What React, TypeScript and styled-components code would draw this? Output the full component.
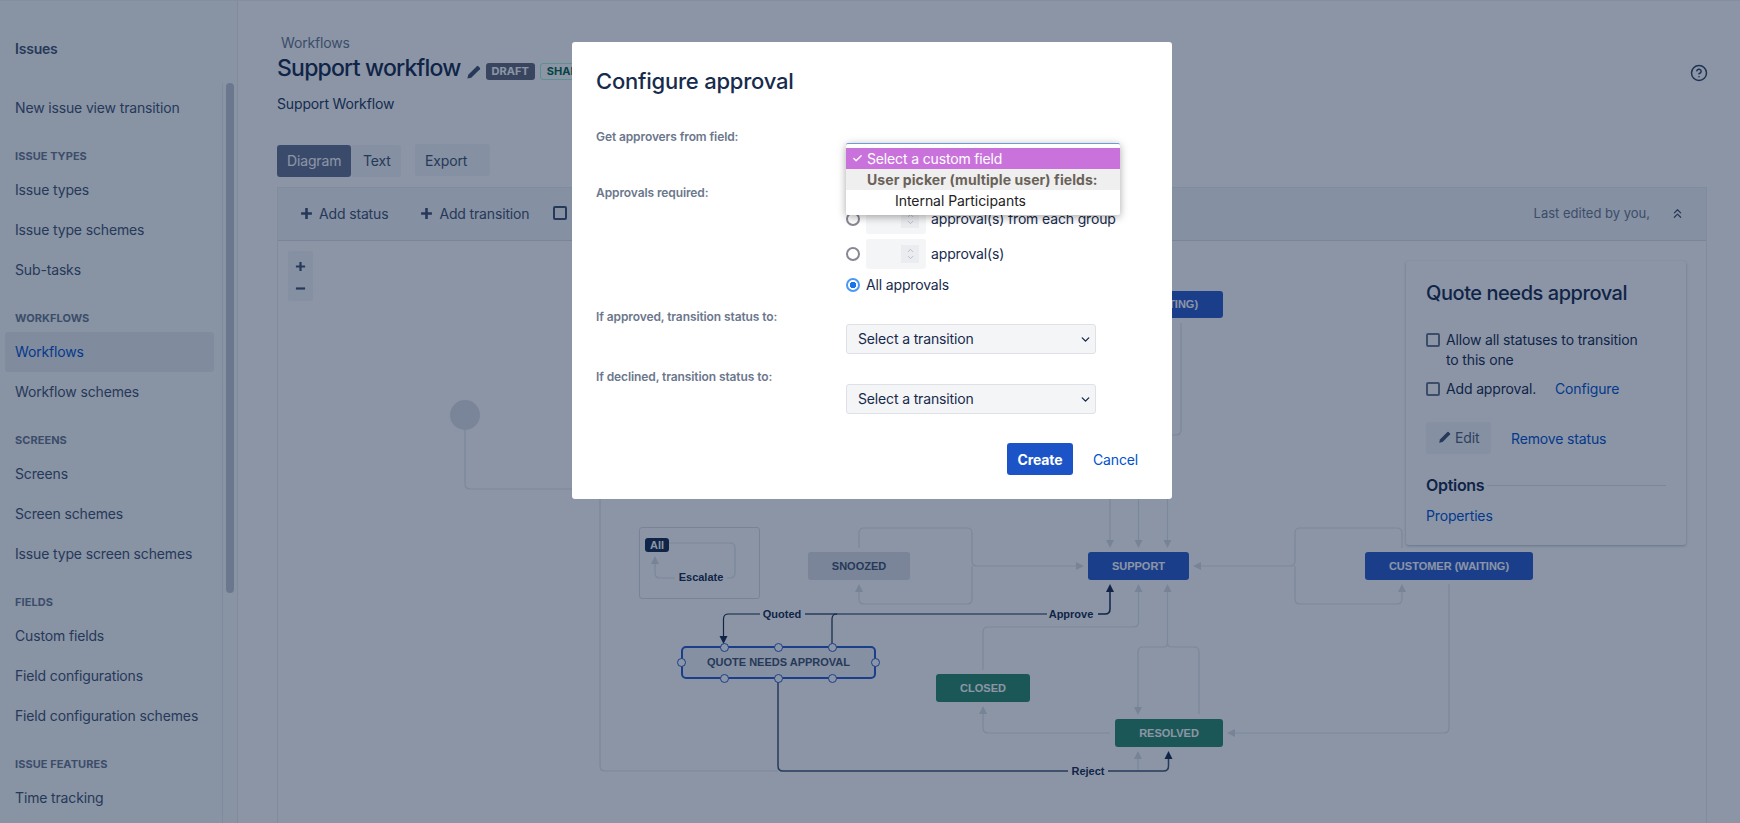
import React from "react";
import styled, { createGlobalStyle } from "styled-components";
import { ChevronsUp, CircleHelp, Check, ChevronDown, ChevronUp } from "lucide-react";

const UI = `Inter, "Noto Sans", sans-serif`;
const DIAGRAM = `"Liberation Sans", Arial, sans-serif`;
const OX = 278;
const OY = 241;

const Global = createGlobalStyle`
  html, body { margin: 0; padding: 0; background: #fff; height: 100%; overflow: hidden; }
  body { font-family: ${UI}; font-size: 14px; color: #172b4d; letter-spacing: -0.15px; }
  #root { height: 823px; overflow: hidden; }
`;

const Page = styled.div`
  display: grid;
  grid-template-columns: 238px 1fr;
  height: 823px;
  border-top: 1px solid #f0f1f4;
  box-sizing: border-box;
  overflow: hidden;
`;
const Sidebar = styled.aside`
  background: #fafbfc;
  border-right: 1px solid #ebecf0;
  display: flex;
  flex-direction: column;
  min-height: 0;
`;
const SidebarTitle = styled.div`
  height: 82px;
  flex: none;
  box-sizing: border-box;
  padding: 38px 0 0 15px;
  font-size: 14px;
  line-height: 20px;
  font-weight: 600;
  letter-spacing: -0.2px;
  color: #42526e;
`;
const SidebarBody = styled.div`
  flex: 1;
  display: flex;
  min-height: 0;
`;
const Nav = styled.nav`
  width: 223px;
  box-sizing: border-box;
  padding: 5px 8px 0 5px;
  border-right: 1px solid #ebecf0;
  flex: none;
`;
const Track = styled.div`
  flex: 1;
  padding-left: 3px;
`;
const Thumb = styled.div`
  width: 8px;
  height: 510px;
  border-radius: 4px;
  background: #c1c7d0;
`;
const NavHeading = styled.div`
  height: 42px;
  box-sizing: border-box;
  padding: 20px 0 0 10px;
  font-size: 11px;
  line-height: 16px;
  font-weight: 700;
  letter-spacing: 0.05px;
  color: #6b778c;
`;
const NavItem = styled.div<{ $active?: boolean }>`
  height: 40px;
  box-sizing: border-box;
  display: flex;
  align-items: center;
  padding: 0 0 2px 10px;
  border-radius: 3px;
  font-size: 14px;
  color: ${(p) => (p.$active ? "#0052cc" : "#42526e")};
  background: ${(p) => (p.$active ? "#ebecf0" : "transparent")};
`;

const Main = styled.main`
  padding: 33px 33px 0 39px;
  display: flex;
  flex-direction: column;
  min-width: 0;
`;
const Header = styled.header`
  display: flex;
  justify-content: space-between;
  align-items: flex-start;
`;
const Crumb = styled.div`
  padding-left: 4px;
  line-height: 18px;
  color: #6b778c;
`;
const TitleRow = styled.div`
  display: flex;
  align-items: center;
  margin-top: 1px;
  height: 30px;
`;
const Title = styled.h1`
  margin: 0;
  font-size: 23px;
  line-height: 30px;
  font-weight: 500;
  letter-spacing: -0.78px;
  color: #172b4d;
`;
const Pencil = styled.svg<{ $size: number }>`
  width: ${(p) => p.$size}px;
  height: ${(p) => p.$size}px;
  fill: #42526e;
  flex: none;
`;
const TitlePencil = styled(Pencil)`
  margin: 9px 5px 0 5px;
`;
const Badge = styled.span<{ $green?: boolean }>`
  margin-top: 6px;
  height: 17px;
  box-sizing: border-box;
  padding: 0 6px;
  display: inline-flex;
  align-items: center;
  border-radius: 3px;
  font-size: 11px;
  font-weight: 700;
  letter-spacing: 0;
  margin-right: 5px;
  color: ${(p) => (p.$green ? "#006644" : "#fff")};
  background: ${(p) => (p.$green ? "#fff" : "#64687a")};
  border: ${(p) => (p.$green ? "1px solid #abf5d1" : "none")};
`;
const Description = styled.p`
  margin: 11px 0 0;
  line-height: 20px;
  font-size: 14px;
  color: #253858;
`;
const Help = styled(CircleHelp)`
  width: 18px;
  height: 18px;
  margin-top: 30px;
  margin-right: -1px;
  color: #344563;
`;
const Tabs = styled.div`
  margin-top: 30px;
  display: flex;
  align-items: flex-start;
  height: 33px;
`;
const Tab = styled.div<{ $active?: boolean; $w: number; $gap?: number; $up?: boolean; $pad?: number }>`
  width: ${(p) => p.$w}px;
  height: 32px;
  box-sizing: border-box;
  margin-left: ${(p) => p.$gap ?? 0}px;
  margin-top: ${(p) => (p.$up ? 0 : 1)}px;
  padding: 0 0 ${(p) => (p.$up ? 0 : 2)}px ${(p) => p.$pad ?? 10}px;
  display: flex;
  align-items: center;
  border-radius: 3px;
  background: ${(p) => (p.$active ? "#667190" : "#f4f5f7")};
  color: ${(p) => (p.$active ? "#fff" : "#42526e")};
`;
const Panel = styled.section`
  margin-top: 10px;
  border: 1px solid #ebecf0;
  border-bottom: 0;
  flex: 1;
  display: flex;
  flex-direction: column;
  min-height: 0;
`;
const Toolbar = styled.div`
  flex: none;
  height: 53px;
  box-sizing: border-box;
  border-bottom: 1px solid #dfe1e6;
  background: #f4f5f7;
  display: flex;
  align-items: center;
  padding: 0 21px 2px 22px;
  color: #42526e;
`;
const ToolButton = styled.div<{ $gap: number }>`
  display: flex;
  align-items: center;
  gap: 6px;
  margin-right: ${(p) => p.$gap}px;
  svg {
    width: 13px;
    height: 13px;
  }
`;
const Box = styled.span`
  width: 14px;
  height: 14px;
  flex: none;
  box-sizing: border-box;
  border: 2px solid #42526e;
  border-radius: 2px;
`;
const ToolSpacer = styled.div`
  flex: 1;
`;
const Edited = styled.span`
  font-size: 13px;
  letter-spacing: 0;
  color: #6b778c;
  margin-right: 20px;
`;
const Collapse = styled(ChevronsUp)`
  width: 15px;
  height: 15px;
  color: #42526e;
`;

const Canvas = styled.div`
  position: relative;
  flex: 1;
  min-height: 0;
  overflow: hidden;
`;
const Lines = styled.svg`
  position: absolute;
  left: 0;
  top: 0;
  width: 1429px;
  height: 582px;
`;
const ZoomBox = styled.div`
  position: absolute;
  left: 10px;
  top: 10px;
  width: 25px;
  height: 50px;
  box-sizing: border-box;
  padding-top: 10px;
  border-radius: 3px;
  background: #f4f5f7;
  display: flex;
  flex-direction: column;
  align-items: center;
  gap: 11px;
  color: #42526e;
  svg {
    width: 11px;
    height: 11px;
  }
`;
const Node = styled.div<{ $x: number; $y: number; $w: number; $h: number; $bg: string; $fg: string }>`
  position: absolute;
  left: ${(p) => p.$x - OX}px;
  top: ${(p) => p.$y - OY}px;
  width: ${(p) => p.$w}px;
  height: ${(p) => p.$h}px;
  display: flex;
  align-items: center;
  justify-content: center;
  border-radius: 3px;
  font: bold 11px/1 ${DIAGRAM};
  letter-spacing: 0;
  background: ${(p) => p.$bg};
  color: ${(p) => p.$fg};
  white-space: nowrap;
`;
const SelectedNode = styled(Node)`
  box-sizing: border-box;
  border: 2px solid #2b5ccb;
  border-radius: 5px;
`;
const Handle = styled.span<{ $x: number; $y: number }>`
  position: absolute;
  left: ${(p) => p.$x - OX - 4}px;
  top: ${(p) => p.$y - OY - 4}px;
  width: 9px;
  height: 9px;
  box-sizing: border-box;
  border-radius: 50%;
  border: 1px solid #2b5ccb;
  background: #fff;
`;
const EdgeLabel = styled.span<{ $x: number; $y: number }>`
  position: absolute;
  left: ${(p) => p.$x - OX}px;
  top: ${(p) => p.$y - OY}px;
  transform: translate(-50%, -50%);
  font: bold 11px/1 ${DIAGRAM};
  letter-spacing: 0;
  color: #172b4d;
  white-space: nowrap;
`;
const GlobalFrame = styled.div`
  position: absolute;
  left: ${639 - OX}px;
  top: ${527 - OY}px;
  width: 121px;
  height: 72px;
  box-sizing: border-box;
  border: 1.5px solid #dadde3;
  border-radius: 3px;
`;
const Side = styled.div`
  position: absolute;
  left: ${1406 - OX}px;
  top: ${261 - OY}px;
  width: 280px;
  height: 284px;
  box-sizing: border-box;
  padding: 20px 20px 0;
  background: #fff;
  border-radius: 3px;
  box-shadow: 0 1px 3px rgba(9, 30, 66, 0.28);
`;
const SideTitle = styled.h2`
  margin: 0 0 25px;
  font-size: 20px;
  line-height: 24px;
  font-weight: 500;
  letter-spacing: -0.45px;
  color: #172b4d;
`;
const CheckRow = styled.div`
  display: flex;
  align-items: flex-start;
  gap: 6px;
  line-height: 20px;
  margin-bottom: 9px;
  ${Box} {
    margin-top: 3px;
    border-color: #6b778c;
  }
`;
const Link = styled.a<{ $gap?: number }>`
  color: #0052cc;
  margin-left: ${(p) => p.$gap ?? 0}px;
`;
const SideActions = styled.div`
  margin-top: 23px;
  display: flex;
  align-items: center;
`;
const EditButton = styled.div`
  width: 65px;
  height: 32px;
  box-sizing: border-box;
  padding: 0 0 2px 12px;
  background: #f4f5f7;
  border-radius: 3px;
  display: flex;
  align-items: center;
  gap: 4px;
  color: #505f79;
  margin-right: 20px;
`;
const OptionsHead = styled.div`
  margin-top: 20px;
  display: flex;
  align-items: center;
  gap: 3px;
  font-size: 16px;
  line-height: 22px;
  font-weight: 600;
  letter-spacing: -0.3px;
  &::after {
    content: "";
    flex: 1;
    height: 1px;
    background: #dfe1e6;
  }
`;
const OptionsLinks = styled.div`
  margin-top: 10px;
  line-height: 20px;
`;

const Overlay = styled.div`
  position: fixed;
  inset: 0;
  background: rgba(9, 30, 66, 0.47);
  padding: 42px 0 0 4px;
  display: flex;
  justify-content: center;
  align-items: flex-start;
`;
const Modal = styled.div`
  width: 600px;
  height: 457px;
  box-sizing: border-box;
  background: #fff;
  border-radius: 3px;
  padding: 24px 24px 0;
`;
const ModalTitle = styled.h2`
  margin: 0 0 34px;
  font-size: 22px;
  line-height: 30px;
  font-weight: 500;
  letter-spacing: -0.22px;
  color: #172b4d;
`;
const FormRow = styled.div<{ $gap?: number }>`
  display: grid;
  grid-template-columns: 250px 1fr;
  margin-bottom: ${(p) => p.$gap ?? 0}px;
`;
const FieldLabel = styled.label`
  font-size: 12px;
  line-height: 14px;
  font-weight: 600;
  color: #6b778c;
  letter-spacing: -0.1px;
`;
const FieldValue = styled.div<{ $top: number }>`
  position: relative;
  padding-top: ${(p) => p.$top}px;
`;
const Select = styled.div<{ $focus?: boolean }>`
  width: 250px;
  height: 30px;
  box-sizing: border-box;
  padding: 0 3px 2px 11px;
  display: flex;
  align-items: center;
  justify-content: space-between;
  background: #f4f5f7;
  border: ${(p) => (p.$focus ? "1px solid #4c9aff" : "1.5px solid #dfe1e6")};
  border-radius: 3px;
  color: #172b4d;
  svg {
    width: 13px;
    height: 13px;
    stroke-width: 2.5;
    margin-top: 2px;
  }
`;
const Menu = styled.ul`
  position: absolute;
  left: 0;
  top: 13px;
  width: 274px;
  height: 72px;
  box-sizing: border-box;
  margin: 0;
  padding: 4px 0 0;
  list-style: none;
  background: #fff;
  box-shadow: 0 2px 9px rgba(0, 0, 0, 0.35);
  border-radius: 2px;
  border-top: 1px solid #6f9ad8;
  z-index: 2;
`;
const MenuItem = styled.li<{ $kind: "selected" | "group" | "plain" }>`
  height: 21px;
  line-height: 21px;
  display: flex;
  align-items: center;
  padding-left: ${(p) => (p.$kind === "plain" ? 49 : 21)}px;
  position: relative;
  letter-spacing: ${(p) => (p.$kind === "group" ? "0.08px" : p.$kind === "plain" ? "-0.05px" : "-0.15px")};
  font-weight: ${(p) => (p.$kind === "group" ? 700 : 400)};
  background: ${(p) =>
    p.$kind === "selected" ? "#ca72dc" : p.$kind === "group" ? "#efefef" : "#fff"};
  color: ${(p) =>
    p.$kind === "selected" ? "#fff" : p.$kind === "group" ? "#6a6259" : "#222"};
  svg {
    position: absolute;
    left: 6px;
    top: 5px;
    width: 11px;
    height: 11px;
    stroke-width: 3;
  }
`;
const RadioRow = styled.div<{ $h: number; $gap: number }>`
  height: ${(p) => p.$h}px;
  margin-bottom: ${(p) => p.$gap}px;
  display: flex;
  align-items: center;
  line-height: 17px;
`;
const RowText = styled.span`
  margin-top: -2px;
`;
const Radio = styled.span<{ $on?: boolean }>`
  width: 14px;
  height: 14px;
  flex: none;
  box-sizing: border-box;
  border-radius: 50%;
  margin-right: 6px;
  border: ${(p) => (p.$on ? "2px solid #4a97f7" : "2px solid #8a8794")};
  background: ${(p) => (p.$on ? "radial-gradient(circle, #1a73e8 0 3px, #fff 3.5px)" : "#fff")};
`;
const NumberInput = styled.div`
  width: 60px;
  height: 30px;
  flex: none;
  margin-right: 5px;
  box-sizing: border-box;
  padding-right: 7px;
  background: #f4f5f7;
  border-radius: 3px;
  display: flex;
  align-items: center;
  justify-content: flex-end;
`;
const Spinner = styled.span`
  width: 18px;
  height: 18px;
  background: #ebecf0;
  display: flex;
  flex-direction: column;
  align-items: center;
  justify-content: center;
  color: #a5adba;
  svg {
    width: 9px;
    height: 9px;
    margin: -1px 0;
    stroke-width: 2;
  }
`;
const Footer = styled.div`
  margin-top: 29px;
  padding-right: 10px;
  display: flex;
  justify-content: flex-end;
  align-items: center;
  gap: 20px;
`;
const Primary = styled.button`
  width: 66px;
  height: 32px;
  padding: 0;
  border: 0;
  border-radius: 3px;
  background: #1c54c8;
  color: #fff;
  font: 700 14px ${UI};
  letter-spacing: -0.15px;
`;
const Cancel = styled.a`
  color: #0052cc;
`;

const sections = [
  { heading: "", items: ["New issue view transition"] },
  { heading: "ISSUE TYPES", items: ["Issue types", "Issue type schemes", "Sub-tasks"] },
  { heading: "WORKFLOWS", items: ["Workflows", "Workflow schemes"] },
  { heading: "SCREENS", items: ["Screens", "Screen schemes", "Issue type screen schemes"] },
  { heading: "FIELDS", items: ["Custom fields", "Field configurations", "Field configuration schemes"] },
  { heading: "ISSUE FEATURES", items: ["Time tracking"] },
];

const LIGHT = "#e2e4e9";
const HEAD = "#dadde3";
const DARK = "#172b4d";
const MID = "#42526e";
const BLUE = "#2b5ccb";
const GREEN = "#2a8a68";

const lightPaths = [
  "M600 470 V766 Q600 771 605 771 H778",
  "M859 548 V533 Q859 528 864 528 H967 Q972 528 972 533 V561 Q972 566 977 566 H1080",
  "M972 566 V599 Q972 604 967 604 H864 Q859 604 859 599 V588",
  "M1110 470 V545",
  "M1138.5 470 V545",
  "M1167.5 470 V545",
  "M1138.5 588 V622 Q1138.5 627 1133.5 627 H988 Q983 627 983 632 V670",
  "M1167.5 588 V643 Q1167.5 647 1163 647 H1143 Q1138 647 1138 652 V711",
  "M1167.5 643 Q1167.5 647 1172 647 H1194 Q1199 647 1199 652 V714",
  "M983 710 V728 Q983 733 988 733 H1110",
  "M1138 756 V771",
  "M1197 566 H1290 Q1295 566 1295 561 V533 Q1295 528 1300 528 H1397 Q1402 528 1402 533 V548",
  "M1295 566 V599 Q1295 604 1300 604 H1397 Q1402 604 1402 599 V588",
  "M1449 584 V728 Q1449 733 1444 733 H1231",
  "M1181 323 V430 Q1181 435 1176 435 H1160",
  "M465 430 V484 Q465 489 470 489 H620",
  "M669 543 H730 Q735 543 735 548 V573 Q735 578 730 578 H727",
  "M675 578 H660 Q655 578 655 573 V560",
];

type Tri = [number, number, "u" | "d" | "l" | "r", string];
const heads: Tri[] = [
  [859, 584, "u", HEAD],
  [1084, 566, "r", HEAD],
  [1110, 548, "d", HEAD],
  [1138.5, 548, "d", HEAD],
  [1167.5, 548, "d", HEAD],
  [1138.5, 584, "u", HEAD],
  [1167.5, 584, "u", HEAD],
  [1138, 715, "d", HEAD],
  [983, 706, "u", HEAD],
  [1138, 751, "u", HEAD],
  [1193, 566, "l", HEAD],
  [1402, 584, "u", HEAD],
  [1227, 733, "l", HEAD],
  [655, 556, "u", HEAD],
  [1110, 584, "u", DARK],
  [723.5, 644, "d", DARK],
  [1168.5, 751, "u", DARK],
];

const triPoints = ([x, y, d]: Tri) => {
  if (d === "u") return `${x},${y} ${x - 4},${y + 8} ${x + 4},${y + 8}`;
  if (d === "d") return `${x},${y} ${x - 4},${y - 8} ${x + 4},${y - 8}`;
  if (d === "l") return `${x},${y} ${x + 8},${y - 4} ${x + 8},${y + 4}`;
  return `${x},${y} ${x - 8},${y - 4} ${x - 8},${y + 4}`;
};

const handles: [number, number][] = [
  [723.5, 647], [778, 647], [832, 647],
  [723.5, 678], [778, 678], [832, 678],
  [681, 662], [875, 662],
];

const PencilGlyph = ({ as: Comp = Pencil, size }: { as?: typeof Pencil; size: number }) => (
  <Comp viewBox="0 0 16 16" $size={size} aria-hidden>
    <path d="M11.6 1.2a1 1 0 0 1 1.4 0l1.8 1.8a1 1 0 0 1 0 1.4L5.6 13.6 1.5 14.5l.9-4.1z" />
  </Comp>
);

const Plus = () => (
  <svg viewBox="0 0 12 12" aria-hidden>
    <path d="M6 1v10M1 6h10" stroke="currentColor" strokeWidth="2.4" fill="none" />
  </svg>
);
const Minus = () => (
  <svg viewBox="0 0 12 12" aria-hidden>
    <path d="M1 6h10" stroke="currentColor" strokeWidth="2.4" fill="none" />
  </svg>
);

export default function App() {
  return (
    <>
      <Global />
      <Page>
        <Sidebar>
          <SidebarTitle>Issues</SidebarTitle>
          <SidebarBody>
            <Nav>
              {sections.map((s) => (
                <React.Fragment key={s.items[0]}>
                  {s.heading && <NavHeading>{s.heading}</NavHeading>}
                  {s.items.map((i) => (
                    <NavItem key={i} $active={i === "Workflows"}>
                      {i}
                    </NavItem>
                  ))}
                </React.Fragment>
              ))}
            </Nav>
            <Track>
              <Thumb />
            </Track>
          </SidebarBody>
        </Sidebar>
        <Main>
          <Header>
            <div>
              <Crumb>Workflows</Crumb>
              <TitleRow>
                <Title>Support workflow</Title>
                <PencilGlyph as={TitlePencil} size={15} />
                <Badge>DRAFT</Badge>
                <Badge $green>SHARED</Badge>
              </TitleRow>
              <Description>Support Workflow</Description>
            </div>
            <Help />
          </Header>
          <Tabs>
            <Tab $active $w={74}>Diagram</Tab>
            <Tab $w={50} $pad={12}>Text</Tab>
            <Tab $w={75} $gap={14} $up>Export</Tab>
          </Tabs>
          <Panel>
            <Toolbar>
              <ToolButton $gap={32}><Plus />Add status</ToolButton>
              <ToolButton $gap={24}><Plus />Add transition</ToolButton>
              <Box />
              <ToolSpacer />
              <Edited>Last edited by you,</Edited>
              <Collapse />
            </Toolbar>
            <Canvas>
              <Lines viewBox={`${OX} ${OY} 1429 582`} fill="none">
                <circle cx="465" cy="415" r="15" fill="#dfe1e6" />
                {lightPaths.map((d) => (
                  <path key={d} d={d} stroke={LIGHT} strokeWidth="1.2" />
                ))}
                <path d="M723.5 640 V619 Q723.5 614 728.5 614 H760" stroke={DARK} strokeWidth="1.2" />
                <path d="M805 614 H837" stroke={DARK} strokeWidth="1.2" />
                <path d="M832 646 V619 Q832 614 837 614 H1047" stroke={DARK} strokeWidth="1.2" />
                <path d="M1098 614 H1105 Q1110 614 1110 609 V590" stroke={DARK} strokeWidth="1.5" />
                <path d="M778 679 V766 Q778 771 783 771 H1068" stroke={MID} strokeWidth="1.5" />
                <path d="M1108 771 H1163.5 Q1168.5 771 1168.5 766 V757" stroke={MID} strokeWidth="1.5" />
                {heads.map((t) => (
                  <polygon key={t.join()} points={triPoints(t)} fill={t[3]} />
                ))}
              </Lines>
              <ZoomBox><Plus /><Minus /></ZoomBox>
              <GlobalFrame />
              <Node $x={645} $y={538} $w={24} $h={14} $bg="#172b4d" $fg="#fff">All</Node>
              <EdgeLabel $x={701} $y={577}>Escalate</EdgeLabel>
              <EdgeLabel $x={782} $y={614}>Quoted</EdgeLabel>
              <EdgeLabel $x={1071} $y={614}>Approve</EdgeLabel>
              <EdgeLabel $x={1088} $y={771}>Reject</EdgeLabel>
              <Node $x={1053} $y={291} $w={170} $h={27} $bg={BLUE} $fg="#fff">CUSTOMER (WAITING)</Node>
              <Node $x={808} $y={552} $w={102} $h={28} $bg="#dfe1e6" $fg="#42526e">SNOOZED</Node>
              <Node $x={1088} $y={552} $w={101} $h={28} $bg={BLUE} $fg="#fff">SUPPORT</Node>
              <Node $x={1365} $y={552} $w={168} $h={28} $bg={BLUE} $fg="#fff">CUSTOMER (WAITING)</Node>
              <SelectedNode $x={681} $y={646} $w={195} $h={33} $bg="#f4f5f7" $fg="#42526e">QUOTE NEEDS APPROVAL</SelectedNode>
              <Node $x={936} $y={674} $w={94} $h={28} $bg={GREEN} $fg="#fff">CLOSED</Node>
              <Node $x={1115} $y={719} $w={108} $h={28} $bg={GREEN} $fg="#fff">RESOLVED</Node>
              {handles.map(([x, y]) => (
                <Handle key={`${x}-${y}`} $x={x} $y={y} />
              ))}
              <Side>
                <SideTitle>Quote needs approval</SideTitle>
                <CheckRow><Box /><span>Allow all statuses to transition<br />to this one</span></CheckRow>
                <CheckRow><Box /><span>Add approval.</span><Link $gap={13}>Configure</Link></CheckRow>
                <SideActions>
                  <EditButton><PencilGlyph size={13} />Edit</EditButton>
                  <Link>Remove status</Link>
                </SideActions>
                <OptionsHead>Options</OptionsHead>
                <OptionsLinks><Link>Properties</Link></OptionsLinks>
              </Side>
            </Canvas>
          </Panel>
        </Main>
      </Page>
      <Overlay>
        <Modal>
          <ModalTitle>Configure approval</ModalTitle>
          <FormRow $gap={13}>
            <FieldLabel>Get approvers from field:</FieldLabel>
            <FieldValue $top={13}>
              <Select $focus />
              <Menu>
                <MenuItem $kind="selected"><Check />Select a custom field</MenuItem>
                <MenuItem $kind="group">User picker (multiple user) fields:</MenuItem>
                <MenuItem $kind="plain">Internal Participants</MenuItem>
              </Menu>
            </FieldValue>
          </FormRow>
          <FormRow $gap={15}>
            <FieldLabel>Approvals required:</FieldLabel>
            <FieldValue $top={18}>
              <RadioRow $h={30} $gap={5}>
                <Radio /><NumberInput><Spinner><ChevronUp /><ChevronDown /></Spinner></NumberInput>
                <RowText>approval(s) from each group</RowText>
              </RadioRow>
              <RadioRow $h={30} $gap={6}>
                <Radio /><NumberInput><Spinner><ChevronUp /><ChevronDown /></Spinner></NumberInput>
                <RowText>approval(s)</RowText>
              </RadioRow>
              <RadioRow $h={20} $gap={0}><Radio $on /><RowText>All approvals</RowText></RadioRow>
            </FieldValue>
          </FormRow>
          <FormRow $gap={16}>
            <FieldLabel>If approved, transition status to:</FieldLabel>
            <FieldValue $top={14}>
              <Select>Select a transition<ChevronDown /></Select>
            </FieldValue>
          </FormRow>
          <FormRow>
            <FieldLabel>If declined, transition status to:</FieldLabel>
            <FieldValue $top={14}>
              <Select>Select a transition<ChevronDown /></Select>
            </FieldValue>
          </FormRow>
          <Footer>
            <Primary>Create</Primary>
            <Cancel>Cancel</Cancel>
          </Footer>
        </Modal>
      </Overlay>
    </>
  );
}
